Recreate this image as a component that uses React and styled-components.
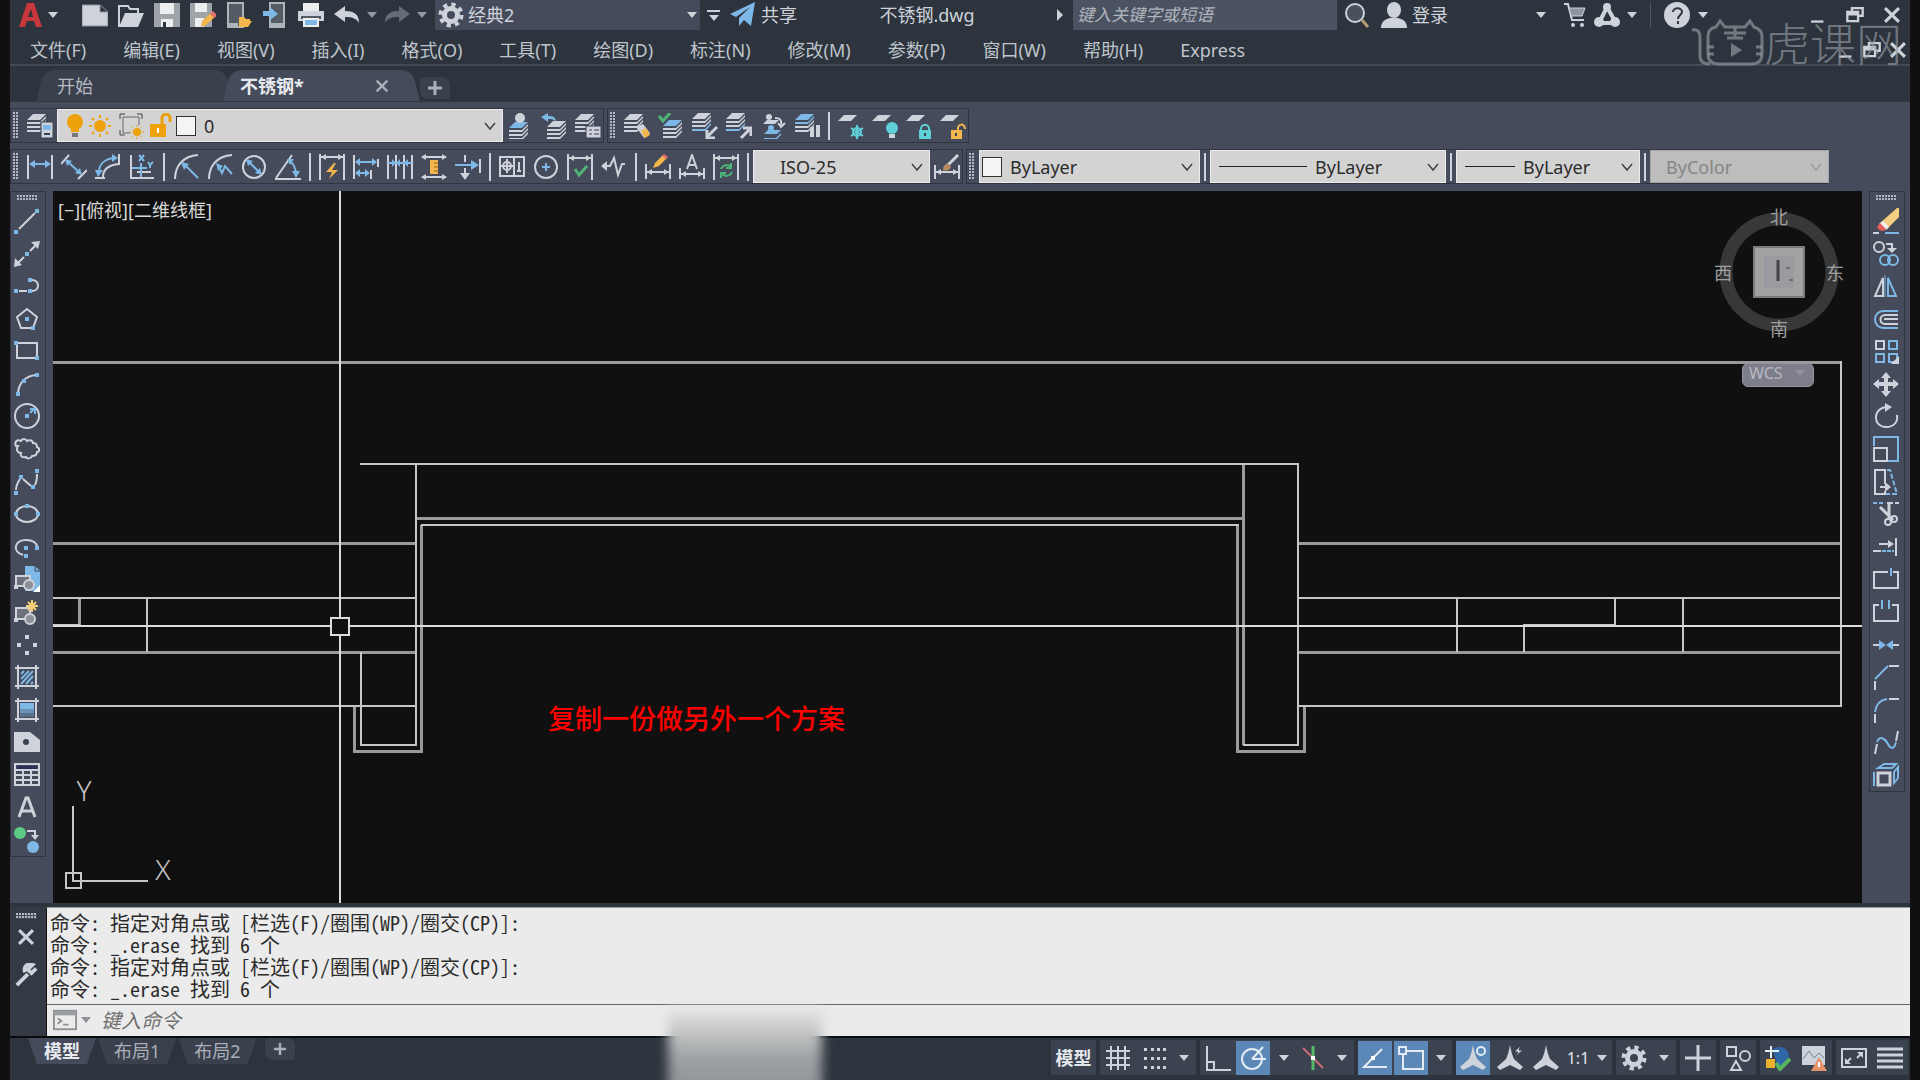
import React from "react"
import styled, { createGlobalStyle, css } from "styled-components"

const theme = {
    frame: "#101010",
    dark: "#2d343d",
    panel: "#454b5a",
    panelLine: "#2f3642",
    field: "#d3d3d3",
    fieldOff: "#bdbdbd",
    light: "#ced3db",
    blue: "#7db8e6",
    active: "#5c88b8",
    command: "#ebebeb",
    sans: `"Noto Sans", "Noto Sans CJK SC", sans-serif`,
    mono: `"Noto Sans Mono CJK SC", "Noto Sans CJK SC", monospace`,
}

const W = theme.light
const B = theme.blue
const Y = "#f2b64c"
const G = "#4fb477"
const D = "#2b2f5a"

const GlobalStyle = createGlobalStyle`
    *{
        box-sizing: border-box;
    }
    body{
        margin: 0;
        background: ${theme.frame};
        color: ${theme.light};
        font-family: ${theme.sans};
        font-size: 18px;
        line-height: 24px;
        overflow: hidden;
    }
    button, select, input{
        font: inherit;
        color: inherit;
        background: none;
        border: 0;
        border-radius: 0;
        padding: 0;
        margin: 0;
    }
`

/* ---------- icons ---------- */

const sheet = (x, y, fill) =>
    <path key={`${x}-${y}`} d={`M${x + 6} ${y}h13l-6 6h-13z`} fill={fill}/>

const stack = (x, y, fills) =>
    <>
        {fills.map((fill, i) =>
            i === 0
                ? sheet(x, y, fill)
                : <path
                    key={i}
                    d={`M${x} ${y + 4 + i * 4}h13l6-6v2l-6 6h-13z`}
                    fill={fill}
                />
        )}
    </>

const dot = (x, y, fill = B) =>
    <rect key={`${x}-${y}`} x={x - 2} y={y - 2} width="4" height="4" fill={fill}/>

const star = <path d="M13 0c1 5 2 10 4 14l9 8-3 3-10-5-10 5-3-3 9-8c2-4 3-9 4-14z" fill={W}/>

const gear =
    <>
        <circle cx="13" cy="13" r="6.5" fill="none" stroke={W} strokeWidth="5"/>
        <circle cx="13" cy="13" r="10.5" fill="none" stroke={W} strokeWidth="4" strokeDasharray="4.2 4.05"/>
    </>

const restore = <path d="M9 9V4h14v10h-5M3 9h14v3H3zM3 9v12h14V9" fill="none" stroke={W} strokeWidth="3"/>

const icons = {
    logo: <path d="M1 25L9 1h7l8 24h-6l-2-6H9l-2 6zM10 15h5l-2-8z" fill="#c8373b"/>,
    newFile: <path d="M0 3h18l8 7v14H0zM18 3v7h8" fill={W} stroke="#8d939b" strokeWidth="1"/>,
    open:
        <>
            <path d="M1 25V4h9l2 3h8v5" fill="none" stroke={W} strokeWidth="2"/>
            <path d="M1 25l6-14h19l-6 14z" fill={W}/>
        </>,
    save:
        <>
            <path d="M0 1h26v24H0z" fill="#9fa4ab"/>
            <path d="M6 1h14v11H6zM7 17h12v8H7z" fill="#eceef0"/>
            <path d="M9 20h3v5H9z" fill={theme.dark}/>
        </>,
    saveAs:
        <>
            <path d="M0 1h22v24H0z" fill="#9fa4ab"/>
            <path d="M5 1h12v9H5zM5 16h9v9H5z" fill="#eceef0"/>
            <path d="M11 25l1-6L22 10l4 4-10 9z" fill={Y}/>
            <path d="M20 12l3-3 4 4-3 3z" fill="#e2726e"/>
        </>,
    openMobile:
        <>
            <rect x="2" y="1" width="15" height="24" fill="#555b64" stroke="#aeb3b9" strokeWidth="2"/>
            <path d="M2 21h10v3H2z" fill="#aeb3b9"/>
            <path d="M13 24v-9h5l2 2h4v2h2l-4 6h-9z" fill={Y}/>
        </>,
    saveMobile:
        <>
            <rect x="8" y="1" width="14" height="24" fill="#555b64" stroke="#aeb3b9" strokeWidth="2"/>
            <path d="M8 21h14v3H8z" fill="#aeb3b9"/>
            <path d="M1 9h7V5l8 7-8 6v-4H1z" fill={B}/>
        </>,
    print:
        <>
            <path d="M5 1h16v8H5z" fill="#eceef0"/>
            <path d="M0 9h26v10H0z" fill={W}/>
            <path d="M3 14h20v3H3z" fill="#555b64"/>
            <path d="M5 16h16v9H5z" fill="#eceef0"/>
            <path d="M7 18h12v5H7z" fill={B}/>
        </>,
    undo: <path d="M0 12l11-8v5c9 0 14 3 14 12-3-5-7-6-14-6v5z" fill={W}/>,
    redo: <path d="M26 12L15 4v5C6 9 1 12 1 21c3-5 7-6 14-6v5z" fill="#666c76"/>,
    gear,
    share: <path d="M0 12L25 0l-4 24-7-6-5 6v-8L20 5 6 15z" fill={B}/>,
    search:
        <>
            <circle cx="11" cy="11" r="9" fill="#4a515c" stroke={W} strokeWidth="2"/>
            <path d="M18 18l6 7" stroke="#b59b74" strokeWidth="3"/>
        </>,
    user:
        <>
            <ellipse cx="13" cy="8" rx="7" ry="8" fill={W}/>
            <path d="M0 26c0-7 5-9 9-10h8c4 1 9 3 9 10z" fill={W}/>
        </>,
    cart:
        <>
            <path d="M3 2h4l4 16h12" fill="none" stroke={W} strokeWidth="2"/>
            <path d="M8 6h16l-3 8H10z" fill="#8f959e" stroke={W} strokeWidth="1"/>
            <circle cx="12" cy="23" r="2" fill={W}/>
            <circle cx="21" cy="23" r="2" fill={W}/>
        </>,
    autodesk:
        <>
            <path d="M13 5L5 21h17z" fill="none" stroke={W} strokeWidth="4"/>
            <circle cx="13" cy="5" r="4" fill={W}/>
            <circle cx="5" cy="20" r="5" fill={W}/>
            <circle cx="21" cy="20" r="5" fill={W}/>
        </>,
    help:
        <>
            <circle cx="13" cy="13" r="13" fill={W}/>
            <path d="M9 10c0-5 9-5 9 0 0 3-4 3-4 7M14 19v3" fill="none" stroke={theme.dark} strokeWidth="2"/>
        </>,
    minimize: <path d="M4 20h16v3H4z" fill={W}/>,
    restore,
    close: <path d="M4 4l18 18M22 4L4 22" stroke={W} strokeWidth="4"/>,
    tabClose: <path d="M6 6l14 14M20 6L6 20" stroke="#a9afb8" strokeWidth="3"/>,
    plus: <path d="M13 6v14M6 13h14" stroke="#aab0b9" strokeWidth="3"/>,

    /* layer toolbar */
    layerProps:
        <>
            {stack(0, 1, [W, W, W, W])}
            <rect x="14" y="9" width="12" height="16" fill={W} stroke="#3a4050"/>
            <rect x="16" y="12" width="8" height="5" fill={B}/>
            <path d="M17 21h6" stroke="#3a4050" strokeWidth="2"/>
        </>,
    bulb:
        <>
            <circle cx="13" cy="9" r="8" fill="#eda20c"/>
            <path d="M9 15h8v4H9z" fill="#eda20c"/>
            <path d="M10 20h6v4h-6z" fill="#777"/>
        </>,
    sun:
        <>
            <circle cx="12" cy="13" r="6" fill="#eda20c"/>
            <path d="M12 2v3M12 21v3M1 13h3M20 13h3M4 5l2 2M18 19l2 2M4 21l2-2M18 7l2-2" stroke="#eda20c" strokeWidth="2"/>
        </>,
    sunFrame:
        <>
            <path d="M2 6V1h5M19 1h5v5M2 17v5h5" fill="none" stroke="#444" strokeWidth="1"/>
            <path d="M12 20H5V4h16v8" fill="none" stroke="#666" strokeWidth="1"/>
            <circle cx="19" cy="19" r="4" fill="#eda20c"/>
            <path d="M19 12v2M19 24v2M12 19h2M24 19h2M14 14l1 1M24 14l-1 1M14 24l1-1M24 24l-1-1" stroke="#eda20c" strokeWidth="1"/>
        </>,
    unlock:
        <>
            <path d="M3 11h16v13H3z" fill="#eda20c"/>
            <path d="M15 11V5c0-5 8-5 8 0v4" fill="none" stroke="#eda20c" strokeWidth="3"/>
            <path d="M11 15v5" stroke="#fff" strokeWidth="2"/>
        </>,
    layerUser:
        <>
            {stack(2, 9, [B, W, W, W])}
            <circle cx="13" cy="5" r="5" fill={W}/>
        </>,
    layerPrev:
        <>
            {stack(6, 8, [W, W, W, W])}
            <path d="M0 4l7-4v3c5 0 8 1 8 6-2-3-4-3-8-3v3z" fill={B}/>
        </>,
    layerState:
        <>
            {stack(0, 1, [W, W, W, W])}
            <rect x="11" y="13" width="15" height="12" fill={W} stroke="#3a4050"/>
            <path d="M14 17h3M19 17h5M14 21h3M19 21h5" stroke="#3a4050" strokeWidth="1"/>
        </>,
    layerMatch:
        <>
            {stack(0, 1, [W, W, W, W])}
            <path d="M12 14l7-3 7 9-6 5z" fill={W}/>
            <path d="M17 18l5-3 4 7-5 3z" fill={Y}/>
        </>,
    layerCheck:
        <>
            {stack(5, 7, [B, W, W, W])}
            <path d="M1 3l4 5 7-8" fill="none" stroke={G} strokeWidth="3"/>
        </>,
    layerIn:
        <>
            {stack(0, 0, [W, W, W, B])}
            <path d="M25 14l-9 9M15 17v8h8" fill="none" stroke={W} strokeWidth="3"/>
        </>,
    layerOut:
        <>
            {stack(0, 0, [W, W, W, B])}
            <path d="M15 25l9-9M17 15h8v8" fill="none" stroke={W} strokeWidth="3"/>
        </>,
    layerWalk:
        <>
            <path d="M3 11l4-4h12l-4 4z" fill={W}/>
            <circle cx="9" cy="4" r="3" fill={W}/>
            <path d="M15 5c5 0 7 2 6 7M18 10l3 4 4-4" fill="none" stroke={W} strokeWidth="2"/>
            <circle cx="11" cy="15" r="3" fill={B}/>
            <path d="M4 21l4-4h13l-4 4zM4 25h12l5-5v2l-4 4H4z" fill={B}/>
        </>,
    layerIsolate:
        <>
            {stack(1, 1, [B, B, W, W])}
            <rect x="16" y="14" width="4" height="10" fill={W}/>
            <rect x="22" y="12" width="4" height="12" fill={W}/>
        </>,
    layerFreeze:
        <>
            {sheet(0, 2, W)}
            <path d="M19 12v14M13 15l12 8M25 15l-12 8" stroke="#5fd0d8" strokeWidth="2"/>
            <circle cx="19" cy="19" r="4" fill="none" stroke="#5fd0d8" strokeWidth="2"/>
        </>,
    layerOff:
        <>
            {sheet(0, 2, W)}
            <circle cx="20" cy="15" r="6" fill="#5fd0d8"/>
            <path d="M17 21h6v4h-6z" fill={W}/>
        </>,
    layerLock:
        <>
            {sheet(0, 2, W)}
            <path d="M13 17h12v9H13z" fill="#5fd0d8"/>
            <path d="M15 17c-1-7 9-7 8 0" fill="none" stroke="#5fd0d8" strokeWidth="2"/>
            <path d="M19 20v3" stroke="#3a4050" strokeWidth="2"/>
        </>,
    layerUnlock:
        <>
            {sheet(0, 2, W)}
            <path d="M11 17h11v9H11z" fill={Y}/>
            <path d="M18 17c-1-7 7-7 7-1" fill="none" stroke={Y} strokeWidth="2"/>
            <path d="M16 20v3" stroke="#3a4050" strokeWidth="2"/>
        </>,

    /* dimension toolbar */
    dimLinear:
        <>
            <path d="M1 1v24M25 1v24" stroke={W} strokeWidth="2"/>
            <path d="M4 10h18" stroke={B} strokeWidth="2"/>
            <path d="M2 10l6-4v8zM24 10l-6-4v8z" fill={B}/>
        </>,
    dimAligned:
        <>
            <path d="M0 10l8-9M17 25l9-9" stroke={W} strokeWidth="2"/>
            <path d="M6 7l13 12" stroke={B} strokeWidth="2"/>
            <path d="M4 5l7 2-5 5zM21 21l-7-2 5-5z" fill={B}/>
        </>,
    dimArc:
        <>
            <path d="M0 24h10M24 0v11M8 23c0-8 6-12 16-13" fill="none" stroke={W} strokeWidth="2"/>
            <path d="M4 18C4 10 10 5 19 4" fill="none" stroke={B} strokeWidth="2"/>
            <path d="M0 16h8l-5 7zM17 0l6 4-6 4z" fill={B}/>
        </>,
    dimOrdinate:
        <>
            <path d="M2 1v23h23M8 18h14" fill="none" stroke={W} strokeWidth="2"/>
            <path d="M12 9v14M3 14h15M10 1l5 6M15 1l-5 6M19 8l2 3 3-3M21 11v3" fill="none" stroke={B} strokeWidth="2"/>
        </>,
    dimRadius:
        <>
            <path d="M25 1C10 2 2 12 2 25" fill="none" stroke={W} strokeWidth="2"/>
            <path d="M10 9l15 15" stroke={B} strokeWidth="2"/>
            <path d="M8 8l8 2-5 6z" fill={B}/>
        </>,
    dimJogged:
        <>
            <path d="M25 1C10 2 2 12 2 25" fill="none" stroke={W} strokeWidth="2"/>
            <path d="M11 11l4 8 3-7 7 8" fill="none" stroke={B} strokeWidth="2"/>
            <path d="M9 9l7 3-5 5z" fill={B}/>
        </>,
    dimDiameter:
        <>
            <circle cx="13" cy="13" r="11" fill="none" stroke={W} strokeWidth="2"/>
            <path d="M7 7l12 12" stroke={B} strokeWidth="2"/>
            <path d="M5 5l7 2-5 5zM21 21l-7-2 5-5z" fill={B}/>
        </>,
    dimAngular:
        <>
            <path d="M17 1L1 24M0 25h26" fill="none" stroke={W} strokeWidth="2"/>
            <path d="M15 7c5 4 6 8 6 14" fill="none" stroke={B} strokeWidth="2"/>
            <path d="M12 5h7l-4 6zM17 17h8l-4 7z" fill={B}/>
        </>,
    dimQuick:
        <>
            <path d="M1 0v26M25 0v26M2 3h22" fill="none" stroke={W} strokeWidth="2"/>
            <path d="M2 3l5-3v6zM24 3l-5-3v6z" fill={W}/>
            <path d="M15 9l-8 9h6l-3 7 9-9h-6l4-7z" fill={Y}/>
        </>,
    dimBaseline:
        <>
            <path d="M1 1v24M25 5v8M18 16v9" stroke={W} strokeWidth="2"/>
            <path d="M3 8h20M3 19h13" fill="none" stroke={B} strokeWidth="2"/>
            <path d="M2 8l5-4v8zM24 8l-5-4v8zM2 19l5-4v8zM17 19l-5-4v8z" fill={B}/>
        </>,
    dimContinue:
        <>
            <path d="M1 1v24M9 1v24M17 1v24M25 1v24" stroke={W} strokeWidth="2"/>
            <path d="M1 9h24" fill="none" stroke={B} strokeWidth="2"/>
            <path d="M9 9L5 5v8zM9 9l4-4v8zM17 9l4-4v8z" fill={B}/>
        </>,
    dimSpace:
        <>
            <path d="M1 3h24M1 23h24" fill="none" stroke={W} strokeWidth="2"/>
            <path d="M0 3l5-3v6zM26 3l-5-3v6zM0 23l5-3v6zM26 23l-5-3v6z" fill={W}/>
            <path d="M9 6h8v14H9z" fill={Y}/>
            <path d="M13 9h4M13 13h4M13 17h4" stroke="#8d6824"/>
        </>,
    dimBreak:
        <>
            <path d="M10 1v7M10 14v7M25 5v14" fill="none" stroke={W} strokeWidth="2"/>
            <path d="M5 19h10l-5 7z" fill={W}/>
            <path d="M0 11h18" fill="none" stroke={B} strokeWidth="2"/>
            <path d="M16 6l8 5-8 5z" fill={B}/>
        </>,
    tolerance:
        <>
            <rect x="1" y="3" width="24" height="19" fill="none" stroke={W} strokeWidth="2"/>
            <circle cx="8" cy="12" r="4" fill="none" stroke={W} strokeWidth="2"/>
            <path d="M8 5v14M2 12h12M15 3v19M20 8v9M18 17h4" stroke={W} strokeWidth="2"/>
        </>,
    centerMark:
        <>
            <circle cx="13" cy="13" r="11" fill="none" stroke={W} strokeWidth="2"/>
            <path d="M13 9v8M9 13h8" stroke={B} strokeWidth="2"/>
        </>,
    inspect:
        <>
            <path d="M1 0v26M25 0v26M2 4h22" fill="none" stroke={W} strokeWidth="2"/>
            <path d="M2 4l5-3v6zM24 4l-5-3v6z" fill={W}/>
            <path d="M8 15l4 6 8-9" fill="none" stroke={G} strokeWidth="3"/>
        </>,
    jogLine:
        <>
            <path d="M3 12h6l4-8 4 17 4-11h3" fill="none" stroke={W} strokeWidth="2"/>
            <path d="M0 12l6-5v10z" fill={W}/>
        </>,
    dimEdit:
        <>
            <path d="M1 10v15M25 10v15M2 18h22" fill="none" stroke={W} strokeWidth="2"/>
            <path d="M2 18l5-3v6zM24 18l-5-3v6z" fill={W}/>
            <path d="M8 14l2-5 8-8 4 3-8 8z" fill={Y}/>
            <path d="M17 2l2-2 4 3-2 2z" fill="#e2726e"/>
        </>,
    dimText:
        <>
            <path d="M1 14v11M25 14v11M2 20h22M8 15l5-14 5 14M10 11h6" fill="none" stroke={W} strokeWidth="2"/>
            <path d="M2 20l5-3v6zM24 20l-5-3v6z" fill={W}/>
        </>,
    dimUpdate:
        <>
            <path d="M1 0v26M25 0v26M2 4h22" fill="none" stroke={W} strokeWidth="2"/>
            <path d="M2 4l5-3v6zM24 4l-5-3v6z" fill={W}/>
            <path d="M8 15c2-5 8-5 10-1M18 9v5h-5M19 18c-2 5-8 5-10 1M8 24v-5h5" fill="none" stroke={G} strokeWidth="2"/>
        </>,
    dimStyle:
        <>
            <path d="M1 11v14M25 11v14M2 18h22" fill="none" stroke={W} strokeWidth="2"/>
            <path d="M2 18l5-3v6zM24 18l-5-3v6z" fill={W}/>
            <path d="M24 1L14 11" stroke={W} strokeWidth="3"/>
            <path d="M9 16c0-5 3-7 6-6l2 3c-1 3-4 4-8 3z" fill="#b98a62"/>
        </>,

    /* draw toolbar */
    line:
        <>
            <path d="M5 21L21 5" stroke={W} strokeWidth="2"/>
            {dot(2, 24)}{dot(23, 3)}
        </>,
    xline:
        <>
            <path d="M3 23l7-7M16 10l7-7" stroke={W} strokeWidth="2"/>
            <path d="M0 26l1-9 7 7zM26 0l-9 1 7 7z" fill={W}/>
            {dot(13, 13)}
        </>,
    polyline:
        <>
            <path d="M5 18h8M18 7c8 0 8 11 0 11" fill="none" stroke={W} strokeWidth="2"/>
            {dot(2, 18)}{dot(16, 18)}{dot(16, 7)}
        </>,
    polygon:
        <>
            <path d="M13 3l10 8-4 11H7L3 11z" fill="none" stroke={W} strokeWidth="2"/>
            {dot(13, 13)}{dot(19, 22)}
        </>,
    rect:
        <>
            <rect x="3" y="5" width="20" height="15" fill="none" stroke={W} strokeWidth="2"/>
            {dot(2, 5)}{dot(23, 20)}
        </>,
    arc:
        <>
            <path d="M4 22C5 11 12 5 22 4" fill="none" stroke={W} strokeWidth="2"/>
            {dot(4, 23)}{dot(10, 10)}{dot(23, 4)}
        </>,
    circle:
        <>
            <circle cx="13" cy="13" r="12" fill="none" stroke={W} strokeWidth="2"/>
            <path d="M16 10l5-5M16 6h5v5" fill="none" stroke={B} strokeWidth="2"/>
            {dot(13, 13)}
        </>,
    cloud: <path d="M2 10c-2-4 1-7 5-5 2-3 5-2 6 0 3-2 6 0 6 2 4 0 4 3 4 4 3 1 3 5 0 5 0 4-3 4-5 4-1 3-5 3-6 1-4 1-6-1-5-4-4 0-5-4-3-7z" fill="none" stroke={W} strokeWidth="2"/>,
    spline:
        <>
            <path d="M2 21c0-5 2-8 4-11M9 10l8 7M21 16c2-4 2-7 2-11" fill="none" stroke={W} strokeWidth="2"/>
            {dot(2, 24)}{dot(7, 8)}{dot(19, 18)}{dot(23, 2)}
        </>,
    ellipse:
        <>
            <ellipse cx="13" cy="13" rx="11" ry="8" fill="none" stroke={W} strokeWidth="2"/>
            {dot(2, 13)}{dot(24, 13)}{dot(13, 5)}
        </>,
    ellipseArc:
        <>
            <path d="M9 21C-2 18 0 6 12 6c7 0 11 3 11 7" fill="none" stroke={W} strokeWidth="2"/>
            {dot(12, 14)}{dot(23, 14)}{dot(12, 22)}
        </>,
    insertBlock:
        <>
            <path d="M11 0h10l5 5v20H11z" fill={B}/>
            <path d="M21 0v5h5" fill="none" stroke="#3a4050"/>
            <path d="M2 20V10h14v10z" fill="#6c717b" stroke={W} strokeWidth="2"/>
            <circle cx="15" cy="19" r="5" fill="#8b9099" stroke={W} strokeWidth="2"/>
            <path d="M26 19v7h-7z" fill="#fff"/>
            {dot(2, 21, W)}
        </>,
    makeBlock:
        <>
            <path d="M2 20V9h14v11z" fill="#6c717b" stroke={W} strokeWidth="2"/>
            <circle cx="16" cy="20" r="5" fill="#8b9099" stroke={W} strokeWidth="2"/>
            <path d="M18 1v12M12 7h12M14 3l8 8M22 3l-8 8" stroke="#f6ce74" strokeWidth="2"/>
            {dot(2, 21, W)}
        </>,
    point: <>{dot(13, 5, W)}{dot(5, 13, W)}{dot(21, 13, W)}{dot(13, 21, W)}</>,
    hatch:
        <>
            <path d="M4 1v24M22 1v24M1 4h24M1 22h24" stroke={W} strokeWidth="2"/>
            <path d="M7 10l3-3M7 15l8-8M7 20L19 7M12 20l7-8M17 20l2-2" stroke={B} strokeWidth="2"/>
        </>,
    gradient:
        <>
            <path d="M4 1v24M22 1v24M1 4h24M1 22h24" stroke={W} strokeWidth="2"/>
            <rect x="6" y="6" width="14" height="6" fill={B}/>
            <rect x="6" y="12" width="14" height="4" fill="#6b93b8"/>
            <rect x="6" y="16" width="14" height="4" fill="#566f8b"/>
        </>,
    region:
        <>
            <path d="M0 3h16l10 8v12H0z" fill={W}/>
            <circle cx="12" cy="13" r="3" fill="#3a4050"/>
        </>,
    table:
        <>
            <rect x="1" y="2" width="24" height="21" fill="none" stroke={W} strokeWidth="2"/>
            <rect x="3" y="4" width="20" height="3" fill={D}/>
            <path d="M1 8h24M1 13h24M1 18h24M9 8v15M17 8v15" stroke={W} strokeWidth="2"/>
        </>,
    mtext: <path d="M5 23L12 4h2l7 19M8 17h10" fill="none" stroke={W} strokeWidth="3"/>,
    addSelected:
        <>
            <circle cx="6" cy="6" r="6" fill="#5ccb85"/>
            <path d="M13 4h8v6" fill="none" stroke={W} strokeWidth="2"/>
            <path d="M17 8h8l-4 5z" fill={W}/>
            <circle cx="19" cy="20" r="6" fill={B}/>
        </>,

    /* modify toolbar */
    erase:
        <>
            <path d="M24 0h2v9L14 21l-7-6z" fill="#f3cf82"/>
            <path d="M10 13l6 6-3 3-7-6z" fill="#f0f0f0"/>
            <path d="M7 15l6 6c-3 4-8 1-9-2z" fill="#e35d5b"/>
            <path d="M0 25h6" stroke={W} strokeWidth="2"/>
            <path d="M12 25h14" stroke={B} strokeWidth="2"/>
        </>,
    copy:
        <>
            <circle cx="6" cy="6" r="5" fill="none" stroke={W} strokeWidth="2"/>
            <path d="M13 3h6v5" fill="none" stroke={W} strokeWidth="2"/>
            <path d="M14 7h10l-5 5z" fill={W}/>
            <circle cx="12" cy="19" r="5" fill="none" stroke={B} strokeWidth="2"/>
            <circle cx="20" cy="19" r="5" fill="none" stroke={B} strokeWidth="2"/>
        </>,
    mirror:
        <>
            <path d="M10 5v18H2z" fill="none" stroke={W} strokeWidth="2"/>
            <path d="M15 5v18h8z" fill="none" stroke={B} strokeWidth="2"/>
            <path d="M12 2v22" stroke={B} strokeWidth="1"/>
        </>,
    offset:
        <>
            <path d="M25 5H11c-12 0-12 17 0 17h14" fill="none" stroke={B} strokeWidth="2"/>
            <path d="M25 9H12c-6 0-6 9 0 9h13M25 13H11" fill="none" stroke={W} strokeWidth="2"/>
        </>,
    array:
        <>
            <rect x="3" y="3" width="8" height="8" fill="none" stroke={W} strokeWidth="2"/>
            <path d="M16 3h8v8h-8zM3 16h8v8H3zM16 16h8v8h-8z" fill="none" stroke={B} strokeWidth="2"/>
            <path d="M26 18v8h-8z" fill={W}/>
        </>,
    move: <path d="M13 1l5 6h-3v4h5V8l6 5-6 5v-3h-5v5h3l-5 6-5-6h3v-5H6v3l-6-5 6-5v3h5V7H8z" fill={W}/>,
    rotate:
        <>
            <path d="M13 4C-1 6 0 24 13 24c9 0 12-6 11-12" fill="none" stroke={W} strokeWidth="2"/>
            <path d="M12 0l7 4-7 5z" fill={W}/>
        </>,
    scale:
        <>
            <path d="M1 10V1h24v24H15" fill="none" stroke={B} strokeWidth="2"/>
            <rect x="1" y="12" width="13" height="13" fill="none" stroke={W} strokeWidth="2"/>
        </>,
    stretch:
        <>
            <path d="M12 15V1H2v24h10v-3" fill="none" stroke={W} strokeWidth="2"/>
            <path d="M14 1h3l7 24H13" fill="none" stroke={B} strokeWidth="2" strokeDasharray="5 2"/>
            <path d="M7 18h6" fill="none" stroke={W} strokeWidth="2"/>
            <path d="M12 13l6 5-6 5z" fill={W}/>
        </>,
    trim:
        <>
            <path d="M0 2h12" stroke={B} strokeWidth="2" strokeDasharray="4 2"/>
            <path d="M14 2h12" stroke={W} strokeWidth="2" strokeDasharray="6 2"/>
            <path d="M16 1v17M7 6l13 13" stroke={W} strokeWidth="3"/>
            <circle cx="15" cy="21" r="3" fill="none" stroke={W} strokeWidth="2"/>
            <circle cx="21" cy="18" r="3" fill="none" stroke={W} strokeWidth="2"/>
        </>,
    extend:
        <>
            <path d="M23 4v18M6 10h11" fill="none" stroke={W} strokeWidth="2"/>
            <path d="M15 6l6 4-6 4z" fill={W}/>
            <path d="M0 17h8" stroke={W} strokeWidth="2"/>
            <path d="M9 17h12" stroke={B} strokeWidth="2" strokeDasharray="4 1"/>
        </>,
    breakPoint:
        <>
            <path d="M15 6H1v16h24V6h-5" fill="none" stroke={W} strokeWidth="2"/>
            <path d="M18 2v8" stroke={B} strokeWidth="2"/>
        </>,
    breakGap:
        <>
            <path d="M6 6H1v16h24V6h-6" fill="none" stroke={W} strokeWidth="2"/>
            <path d="M9 1v9M16 1v9" stroke={B} strokeWidth="2"/>
        </>,
    join:
        <>
            <path d="M0 13h7M19 13h7" stroke={W} strokeWidth="2"/>
            <path d="M6 8l7 5-7 5zM20 8l-7 5 7 5z" fill={B}/>
        </>,
    chamfer:
        <>
            <path d="M2 26v-9M16 2h10" stroke={W} strokeWidth="2"/>
            <path d="M2 15L15 2" stroke={B} strokeWidth="2"/>
        </>,
    fillet:
        <>
            <path d="M2 26v-9M16 2h10" stroke={W} strokeWidth="2"/>
            <path d="M2 15C3 7 7 3 14 2" fill="none" stroke={B} strokeWidth="2"/>
        </>,
    blend:
        <>
            <path d="M2 25l2-10M23 12l2-10" stroke={W} strokeWidth="2"/>
            <path d="M4 13c3-8 9-2 11 2s6 7 8-2" fill="none" stroke={B} strokeWidth="2"/>
        </>,
    explode:
        <>
            <path d="M5 6l6-4h12l-4 4zM21 10l4-5v11l-4 5zM1 10v14" fill="none" stroke={B} strokeWidth="2"/>
            <rect x="5" y="11" width="12" height="12" fill="none" stroke={W} strokeWidth="3"/>
        </>,

    /* command line */
    wrench: <path d="M3 24L15 12M24 6l-5 5-4-4 5-5c-7-2-10 3-8 8" fill="none" stroke={W} strokeWidth="4"/>,
    prompt:
        <>
            <rect x="1" y="3" width="24" height="20" fill="none" stroke="#8c8f94" strokeWidth="2"/>
            <path d="M1 3h24v5H1z" fill="#9a9da2"/>
            <path d="M5 11l4 3-4 3M11 18h6" fill="none" stroke="#8c8f94" strokeWidth="2"/>
        </>,

    /* status bar */
    grid: <path d="M6 1v24M13 1v24M20 1v24M1 6h24M1 13h24M1 20h24" stroke={W} strokeWidth="2"/>,
    snap: <>{[3, 10, 16, 22].map(x => [4, 13, 22].map(y => <rect key={`${x}-${y}`} x={x} y={y - 1} width="3" height="3" fill={W}/>))}</>,
    ortho: <path d="M2 1v24h24M2 17h7v8" fill="none" stroke={W} strokeWidth="2"/>,
    polar:
        <>
            <circle cx="12" cy="14" r="10" fill="none" stroke="#e3ebf3" strokeWidth="2"/>
            <path d="M12 14L23 2M12 14h14" stroke="#e3ebf3" strokeWidth="2"/>
        </>,
    iso:
        <>
            <path d="M3 3l20 20" stroke="#c96c76" strokeWidth="2"/>
            <path d="M13 1v24" stroke="#57b86a" strokeWidth="3"/>
            {dot(13, 13, "#fff")}
        </>,
    tracking:
        <>
            <path d="M20 4L2 22h23" fill="none" stroke="#e3ebf3" strokeWidth="2"/>
            {dot(11, 13, "#fff")}
        </>,
    osnap:
        <>
            <path d="M9 6h16v18H5V10" fill="none" stroke="#e3ebf3" strokeWidth="2"/>
            <rect x="1" y="2" width="7" height="7" fill="none" stroke="#e3ebf3" strokeWidth="2"/>
        </>,
    annoVisible:
        <>
            {star}
            <circle cx="21" cy="6" r="4" fill={theme.active} stroke="#e3ebf3" strokeWidth="2"/>
        </>,
    annoAuto:
        <>
            {star}
            <path d="M24 0l-7 7h4l-4 6 9-8h-4z" fill={W} stroke="#3a4150" strokeWidth="1"/>
        </>,
    anno: star,
    cross: <path d="M13 0v26M0 13h26" stroke={W} strokeWidth="3"/>,
    shapes:
        <>
            <rect x="2" y="2" width="9" height="9" fill="none" stroke={W} strokeWidth="2"/>
            <circle cx="20" cy="11" r="5" fill="none" stroke={W} strokeWidth="2"/>
            <path d="M11 16l-5 9h10z" fill="none" stroke={W} strokeWidth="2"/>
        </>,
    graphics:
        <>
            <path d="M8 4c8-5 16 0 16 8s-6 11-12 9z" fill="#2f66a8"/>
            <path d="M6 1v12M0 6h14" stroke="#e3ebf3" strokeWidth="2"/>
            <path d="M1 14h9v9H1z" fill="#edb02e"/>
            <path d="M11 18l4 6 10-10" fill="none" stroke="#57b45f" strokeWidth="4"/>
        </>,
    monitor:
        <>
            <rect x="1" y="1" width="23" height="19" fill={W}/>
            <path d="M2 14l6-8 5 7 5-5 5 5" fill="none" stroke="#6d8791" strokeWidth="1"/>
            <path d="M18 12l8 14H10z" fill="#e5936d"/>
            <path d="M18 17v5" stroke="#fff" strokeWidth="2"/>
        </>,
    fullscreen:
        <>
            <rect x="1" y="4" width="24" height="18" fill="none" stroke={W} strokeWidth="2"/>
            <path d="M4 19v-6l6 6zM22 7v6l-6-6z" fill={W}/>
            <path d="M6 17l4-4M20 9l-4 4" stroke={W} strokeWidth="2"/>
        </>,
    menu: <path d="M0 4h26M0 10h26M0 16h26M0 22h26" stroke={W} strokeWidth="3"/>,
}

const Svg = styled.svg`
    display: block;
    flex: none;
    width: ${p => p.$size}px;
    height: ${p => p.$size}px;
`

const Icon = ({ name, size = 26 }) =>
    <Svg $size={size} viewBox="0 0 26 26" aria-hidden="true">{icons[name]}</Svg>

const Caret = styled.span`
    flex: none;
    width: 0;
    height: 0;
    border-left: 5px solid transparent;
    border-right: 5px solid transparent;
    border-top: 6px solid ${p => p.$color || theme.light};
`

const CaretRight = styled.span`
    width: 0;
    height: 0;
    border-top: 6px solid transparent;
    border-bottom: 6px solid transparent;
    border-left: 6px solid ${theme.light};
`

const IconButton = styled.button`
    display: flex;
    align-items: center;
    justify-content: center;
    flex: none;
    gap: ${p => p.$gap || 0}px;
    cursor: pointer;
`

/* ---------- page ---------- */

const Page = styled.div`
    display: flex;
    flex-direction: column;
    min-height: 100vh;
    margin: 0 10px;
    background: ${theme.dark};
    white-space: nowrap;
    position: relative;
`

/* ---------- title bar ---------- */

const TitleBar = styled.header`
    display: flex;
    align-items: center;
    height: 30px;
    padding: 0 8px;
`

const Tools = styled.div`
    display: flex;
    align-items: center;
    gap: ${p => p.$gap}px;
    margin-left: ${p => p.$before || 0}px;
`

const Workspace = styled.label`
    display: flex;
    align-items: center;
    gap: 4px;
    width: 265px;
    height: 30px;
    padding: 0 3px;
    margin-left: 8px;
    background: ${theme.panel};
`

const PlainSelect = styled.select`
    flex: 1;
    min-width: 0;
    appearance: none;
    outline: none;
`

const OverflowMark = styled.span`
    display: flex;
    flex-direction: column;
    align-items: center;
    gap: 3px;
    &::before{
        content: "";
        width: 13px;
        height: 2px;
        background: ${theme.light};
    }
`

const DocTitle = styled.h1`
    flex: 1;
    margin: 0;
    font-size: 18px;
    font-weight: 400;
    text-align: center;
`

const SearchInput = styled.input`
    width: 264px;
    height: 30px;
    padding: 0 4px 2px;
    background: #4b5362;
    font-size: 17px;
    outline: none;
    &::placeholder{
        color: #b0b5be;
        font-style: italic;
        opacity: 1;
    }
`

const Divider = styled.span`
    width: 1px;
    height: 26px;
    background: #4d535d;
`

/* ---------- menu ---------- */

const MenuBar = styled.nav`
    display: flex;
    align-items: center;
    height: 36px;
    padding: 5px 2px 0 20px;
    border-bottom: 2px solid #444a53;
`

const MenuList = styled.div`
    display: flex;
    gap: 37px;
    flex: 1;
`

const MenuLink = styled.a`
    color: #bfc4cc;
    text-decoration: none;
`

/* ---------- file tabs ---------- */

const FileTabs = styled.div`
    display: flex;
    align-items: flex-end;
    height: 36px;
    padding-left: 36px;
    border-bottom: 1px solid ${theme.panelLine};
`

const FileTab = styled.div`
    position: relative;
    z-index: 0;
    display: flex;
    align-items: center;
    justify-content: space-between;
    width: 187px;
    height: 31px;
    padding: 0 28px 0 ${p => p.$active ? 7 : 11}px;
    color: ${p => p.$active ? "#e6e9ee" : "#b4b9c2"};
    font-weight: ${p => p.$active ? 700 : 400};
    &::before, &::after{
        content: "";
        position: absolute;
        z-index: -1;
        top: 0;
        bottom: 0;
        width: 60%;
        background: ${p => p.$active ? theme.panel : "#3a404c"};
    }
    &::before{
        left: -6px;
        border-radius: 10px 0 0 0;
        transform: skewX(-14deg);
    }
    &::after{
        right: 4px;
        border-radius: 0 10px 0 0;
        transform: skewX(14deg);
    }
`

const NewTab = styled(IconButton)`
    width: 30px;
    height: 22px;
    margin: 0 0 2px ${p => p.$before}px;
    background: #3a404c;
    border-radius: 3px 8px 3px 8px;
`

/* ---------- toolbars ---------- */

const ToolbarArea = styled.div`
    display: flex;
    flex-direction: column;
    gap: 6px;
    padding: 6px 0 7px;
    background: ${theme.panel};
`

const ToolbarRow = styled.div`
    display: flex;
    gap: 3px;
`

const Toolbar = styled.div`
    display: flex;
    align-items: center;
    gap: 8px;
    height: 35px;
    padding: 0 2px;
    border: 1px solid ${theme.panelLine};
`

const Grip = styled.span`
    flex: none;
    width: ${p => p.$flat ? 21 : 6}px;
    height: ${p => p.$flat ? 6 : 27}px;
    background:
        repeating-linear-gradient(90deg, transparent 0 2px, ${theme.panel} 2px 3px),
        repeating-linear-gradient(transparent 0 2px, ${theme.panel} 2px 3px),
        #b4b9c3;
`

const Separator = styled.span`
    flex: none;
    width: 2px;
    height: 28px;
    background: ${theme.light};
`

const Combo = styled.label`
    display: flex;
    align-items: center;
    gap: 8px;
    width: ${p => p.$width}px;
    height: 33px;
    margin: 0 -4px;
    padding: 0 6px 0 ${p => p.$pad}px;
    background: ${p => p.$off ? theme.fieldOff : theme.field};
    color: ${p => p.$off ? "#858585" : "#2c2c2c"};
    border: 1px solid ${p => p.$off ? "#a5a5a5" : "#ececec"};
    select:disabled{
        opacity: 1;
    }
`

const Swatch = styled.span`
    flex: none;
    width: 20px;
    height: 20px;
    background: #f4f4f4;
    border: 1px solid #333;
`

const LineSample = styled.span`
    flex: none;
    width: ${p => p.$width}px;
    height: 1px;
    background: #222;
`

const Chevron = ({ off }) =>
    <Svg $size={12} viewBox="0 0 12 12" aria-hidden="true">
        <path d="M1 3l5 6 5-6" fill="none" stroke={off ? "#9b9b9b" : "#444"} strokeWidth="1.5"/>
    </Svg>

/* ---------- workspace ---------- */

const Body = styled.main`
    display: grid;
    grid-template-columns: 43px 1fr 48px;
    flex: 1;
    background: ${theme.panel};
`

const SideToolbar = styled.div`
    display: flex;
    flex-direction: column;
    align-items: center;
    justify-content: space-between;
    width: 36px;
    height: ${p => p.$height}px;
    margin-left: ${p => p.$before || 0}px;
    padding: 3px 2px 3px 0;
    border: 1px solid ${theme.panelLine};
`

const SideTools = styled.div`
    display: flex;
    flex-direction: column;
    justify-content: space-between;
    flex: 1;
    margin-top: 7px;
`

const Canvas = styled.section`
    position: relative;
    background: ${theme.frame};
    overflow: hidden;
`

const Drawing = styled.svg`
    display: block;
    width: 100%;
    height: auto;
`

const ViewLabel = styled.div`
    position: absolute;
    left: 5px;
    top: 7px;
    color: #d8d8d8;
`

const Caption = styled.div`
    position: absolute;
    left: 495px;
    top: 512px;
    color: #f00;
    font-size: 27px;
    font-weight: 500;
    line-height: 32px;
`

const AxisLabel = styled.div`
    position: absolute;
    left: ${p => p.$x}px;
    top: ${p => p.$y}px;
    width: 24px;
    text-align: center;
    font-size: 28px;
    font-weight: 300;
    line-height: 26px;
    color: #c4c4c4;
`

const ViewCube = styled.div`
    position: absolute;
    top: 14px;
    right: 18px;
    display: grid;
    grid-template-columns: 18px 94px 18px;
    grid-template-rows: 24px 88px 24px;
    place-items: center;
    color: #a0a0a0;
`

const Ring = styled.svg`
    position: absolute;
    left: 5px;
    top: 7px;
    width: 120px;
    height: 120px;
`

const Compass = styled.span`
    position: relative;
    grid-area: ${p => p.$area};
`

const WcsButton = styled.button`
    position: absolute;
    top: 172px;
    right: 48px;
    display: flex;
    align-items: center;
    justify-content: space-between;
    width: 72px;
    height: 24px;
    padding: 0 8px 4px 6px;
    background: #7d7e8a;
    color: #b8b9c2;
    border: 1px solid #94959f;
    border-radius: 6px;
    font-size: 16px;
`

/* ---------- command line ---------- */

const CommandPanel = styled.section`
    display: flex;
    margin-top: 4px;
    border-bottom: 2px solid #0b0c0e;
    background: #333a45;
`

const CommandHandle = styled.div`
    display: flex;
    flex-direction: column;
    align-items: center;
    gap: 8px;
    width: 36px;
    padding: 6px 4px 0 0;
`

const WrenchButton = styled(IconButton)`
    margin-top: 8px;
`

const CommandBody = styled.div`
    flex: 1;
    background: ${theme.command};
    color: #2b2b2b;
    font-family: ${theme.mono};
    font-size: 20px;
    border-left: 1px solid #111;
    border-top: 1px solid #999;
`

const History = styled.pre`
    margin: 0;
    padding: 4px 3px;
    font: inherit;
    line-height: 22px;
    border-bottom: 1px solid #666;
`

const Prompt = styled.label`
    display: flex;
    align-items: center;
    height: 31px;
    padding: 0 0 2px 6px;
    gap: 4px;
`

const CommandInput = styled.input`
    flex: 1;
    margin-left: 6px;
    outline: none;
    &::placeholder{
        color: #707070;
        font-style: italic;
        opacity: 1;
    }
`

/* ---------- status bar ---------- */

const StatusBar = styled.footer`
    display: flex;
    justify-content: space-between;
    height: 42px;
    padding-right: 2px;
`

const LayoutTabs = styled.div`
    display: flex;
    height: 26px;
    padding-left: 18px;
    gap: 2px;
`

const LayoutTab = styled.button`
    padding: 0 16px;
    color: ${p => p.$active ? "#e6e9ee" : "#aab0ba"};
    font-weight: ${p => p.$active ? 700 : 400};
    background: ${p => p.$active ? theme.panel : "#3a404c"};
    clip-path: polygon(0 0, 100% 0, calc(100% - 9px) 100%, 9px 100%);
`

const StatusGroups = styled.div`
    display: flex;
    gap: 4px;
    padding-top: 2px;
`

const StatusGroup = styled.div`
    display: flex;
    align-items: center;
    height: 35px;
    background: #3b4250;
`

const StatusButton = styled(IconButton)`
    width: ${p => p.$width || 36}px;
    height: 34px;
    ${p => p.$active && css`
        width: 34px;
        margin-right: 2px;
        background: ${theme.active};
    `}
`

const StatusText = styled.span`
    font-size: ${p => p.$bold ? 18 : 16}px;
    font-weight: ${p => p.$bold ? 700 : 400};
    color: #e3e6eb;
`

const SmudgeClip = styled.div`
    position: absolute;
    inset: 0;
    overflow: hidden;
    pointer-events: none;
`

const Smudge = styled.div`
    position: absolute;
    left: 658px;
    bottom: -12px;
    width: 154px;
    height: 84px;
    background: linear-gradient(#e6e6e6 0, #bcbebf 34%, #9b9ea1 64%, #8f959a 100%);
    filter: blur(6px);
`

/* ---------- watermark ---------- */

const Watermark = styled.div`
    position: absolute;
    right: 8px;
    top: 18px;
    display: flex;
    align-items: center;
    color: rgba(150, 157, 165, 0.65);
    font-size: 46px;
    font-weight: 300;
    line-height: 50px;
    pointer-events: none;
    svg{
        width: 72px;
        height: 50px;
    }
`

/* ---------- data ---------- */

const quickTools = ["newFile", "open", "save", "saveAs", "openMobile", "saveMobile", "print"]

const menus = [
    "文件(F)", "编辑(E)", "视图(V)", "插入(I)", "格式(O)", "工具(T)", "绘图(D)",
    "标注(N)", "修改(M)", "参数(P)", "窗口(W)", "帮助(H)", "Express",
]

const layerTools = ["layerUser", "layerPrev", "layerState"]

const layerTools2 = [
    "layerMatch", "layerCheck", "layerIn", "layerOut", "layerWalk", "layerIsolate", "|",
    "layerFreeze", "layerOff", "layerLock", "layerUnlock",
]

const dimTools = [
    "dimLinear", "dimAligned", "dimArc", "dimOrdinate", "|",
    "dimRadius", "dimJogged", "dimDiameter", "dimAngular", "|",
    "dimQuick", "dimBaseline", "dimContinue", "dimSpace", "dimBreak", "|",
    "tolerance", "centerMark", "inspect", "jogLine", "|",
    "dimEdit", "dimText", "dimUpdate", "|",
]

const drawTools = [
    "line", "xline", "polyline", "polygon", "rect", "arc", "circle", "cloud", "spline", "ellipse",
    "ellipseArc", "insertBlock", "makeBlock", "point", "hatch", "gradient", "region", "table",
    "mtext", "addSelected",
]

const modifyTools = [
    "erase", "copy", "mirror", "offset", "array", "move", "rotate", "scale", "stretch", "trim",
    "extend", "breakPoint", "breakGap", "join", "chamfer", "fillet", "blend", "explode",
]

const history = [
    "命令: 指定对角点或 [栏选(F)/圈围(WP)/圈交(CP)]:",
    "命令: _.erase 找到 6 个",
    "命令: 指定对角点或 [栏选(F)/圈围(WP)/圈交(CP)]:",
    "命令: _.erase 找到 6 个",
]

const status = [
    [{ text: "模型", width: 45, bold: true }],
    [{ icon: "grid" }, { icon: "snap" }, { caret: true }],
    [{ icon: "ortho" }, { icon: "polar", active: true }, { caret: true }, { icon: "iso", width: 34 }, { caret: true }],
    [{ icon: "tracking", active: true }, { icon: "osnap", active: true }, { caret: true, width: 22 }],
    [{ icon: "annoVisible", active: true }, { icon: "annoAuto" }, { icon: "anno" }, { text: "1:1", width: 28 }, { caret: true, width: 20 }],
    [{ icon: "gear" }, { caret: true }],
    [{ icon: "cross" }],
    [{ icon: "shapes" }],
    [{ icon: "graphics" }, { icon: "monitor" }],
    [{ icon: "fullscreen" }, { icon: "menu" }],
]

const ToolButtons = ({ names }) =>
    names.map((name, i) => name === "|"
        ? <Separator key={i}/>
        : <IconButton key={i} type="button" aria-label={name}><Icon name={name}/></IconButton>
    )

const CaretButton = ({ label, color }) =>
    <IconButton type="button" aria-label={label}><Caret $color={color}/></IconButton>

/* ---------- sections ---------- */

const Title = () =>
    <TitleBar>
        <Tools $gap={8}>
            <IconButton type="button" aria-label="application menu" $gap={4}>
                <Icon name="logo"/><Caret/>
            </IconButton>
        </Tools>
        <Tools $gap={10} $before={24}><ToolButtons names={quickTools}/></Tools>
        <Tools $gap={7} $before={10}>
            <ToolButtons names={["undo"]}/>
            <CaretButton label="undo list" color="#9299a3"/>
            <ToolButtons names={["redo"]}/>
            <CaretButton label="redo list" color="#9299a3"/>
        </Tools>
        <Workspace>
            <Icon name="gear"/>
            <PlainSelect aria-label="workspace"><option>经典2</option></PlainSelect>
            <Caret/>
        </Workspace>
        <Tools $gap={10} $before={7}>
            <IconButton type="button" aria-label="customize"><OverflowMark><Caret/></OverflowMark></IconButton>
            <IconButton type="button" $gap={5}><Icon name="share"/>共享</IconButton>
        </Tools>
        <DocTitle>不锈钢.dwg</DocTitle>
        <Tools $gap={10}>
            <IconButton type="button" aria-label="expand search"><CaretRight/></IconButton>
            <SearchInput type="text" aria-label="search" placeholder="键入关键字或短语"/>
        </Tools>
        <Tools $gap={11} $before={7}>
            <IconButton type="button" aria-label="find"><Icon name="search"/></IconButton>
            <IconButton type="button" $gap={5}><Icon name="user"/>登录</IconButton>
        </Tools>
        <Tools $gap={8} $before={88}>
            <CaretButton label="account"/>
            <Tools $gap={7} $before={7}>
                <ToolButtons names={["cart", "autodesk"]}/>
                <CaretButton label="apps"/>
            </Tools>
        </Tools>
        <Tools $gap={13} $before={13}>
            <Divider/>
            <IconButton type="button" aria-label="help" $gap={8}><Icon name="help"/><Caret/></IconButton>
        </Tools>
        <Tools $gap={17} $before={100}>
            <IconButton type="button" aria-label="minimize"><Icon name="minimize" size={20}/></IconButton>
            <IconButton type="button" aria-label="restore"><Icon name="restore" size={20}/></IconButton>
            <IconButton type="button" aria-label="close"><Icon name="close" size={20}/></IconButton>
        </Tools>
    </TitleBar>

const Menu = () =>
    <MenuBar>
        <MenuList>
            {menus.map(menu => <MenuLink key={menu} href="#">{menu}</MenuLink>)}
        </MenuList>
        <Tools $gap={6}>
            <IconButton type="button" aria-label="minimize drawing"><Icon name="minimize" size={20}/></IconButton>
            <IconButton type="button" aria-label="restore drawing"><Icon name="restore" size={20}/></IconButton>
            <IconButton type="button" aria-label="close drawing"><Icon name="close" size={20}/></IconButton>
        </Tools>
    </MenuBar>

const Toolbars = () =>
    <ToolbarArea>
        <ToolbarRow>
            <Toolbar>
                <Grip/>
                <ToolButtons names={["layerProps"]}/>
                <Combo $width={446} $pad={4}>
                    <Tools $gap={0}>
                        <Icon name="bulb"/>
                        <Icon name="sun"/>
                        <Tools $gap={3} $before={4}>
                            <Icon name="sunFrame"/>
                            <Icon name="unlock"/>
                            <Swatch/>
                        </Tools>
                    </Tools>
                    <PlainSelect aria-label="layer"><option>0</option></PlainSelect>
                    <Chevron/>
                </Combo>
                <ToolButtons names={layerTools}/>
            </Toolbar>
            <Toolbar>
                <Grip/>
                <ToolButtons names={layerTools2}/>
            </Toolbar>
        </ToolbarRow>
        <ToolbarRow>
            <Toolbar>
                <Grip/>
                <ToolButtons names={dimTools}/>
                <Combo $width={177} $pad={26}>
                    <PlainSelect aria-label="dimension style"><option>ISO-25</option></PlainSelect>
                    <Chevron/>
                </Combo>
                <ToolButtons names={["dimStyle"]}/>
            </Toolbar>
            <Toolbar>
                <Grip/>
                <Combo $width={221} $pad={2}>
                    <Swatch/>
                    <PlainSelect aria-label="color"><option>ByLayer</option></PlainSelect>
                    <Chevron/>
                </Combo>
                <Separator/>
                <Combo $width={236} $pad={8}>
                    <LineSample $width={88}/>
                    <PlainSelect aria-label="linetype"><option>ByLayer</option></PlainSelect>
                    <Chevron/>
                </Combo>
                <Separator/>
                <Combo $width={184} $pad={8}>
                    <LineSample $width={50}/>
                    <PlainSelect aria-label="lineweight"><option>ByLayer</option></PlainSelect>
                    <Chevron/>
                </Combo>
                <Separator/>
                <Combo $width={179} $pad={15} $off>
                    <PlainSelect aria-label="plot style" disabled><option>ByColor</option></PlainSelect>
                    <Chevron off/>
                </Combo>
            </Toolbar>
        </ToolbarRow>
    </ToolbarArea>

const Plan = () =>
    <Drawing viewBox="53 191 1809 712" aria-label="section drawing">
        <g fill="none" stroke="#9a9a9a" strokeWidth="3">
            <path d="M53 362.500H1841"/>
            <path d="M53 543.500H415M1298 543.500H1841"/>
            <path d="M53 652.500H415M1298 652.500H1841"/>
            <path d="M79.500 598V625"/>
            <path d="M416 518.500H1243"/>
            <path d="M421.500 525V751.500H354.500V706"/>
            <path d="M1237.500 525V751.500H1304.500V706"/>
            <path d="M1243.500 464V745"/>
        </g>
        <g fill="none" stroke="#c6c6c6" strokeWidth="2">
            <path d="M1841 361V707"/>
            <path d="M53 598H415M1298 598H1841"/>
            <path d="M53 706H415M1298 706H1841"/>
            <path d="M53 625H80M147 598V652"/>
            <path d="M360 464H1298V745H1243"/>
            <path d="M416 464V745H361V652"/>
            <path d="M421 525H1239"/>
            <path d="M1457 598V652M1683 598V652M1524 652V625H1615V598"/>
            <path d="M73 806V881H148M66 873H81V888H66Z"/>
        </g>
        <g fill="none" stroke="#dcdcdc" strokeWidth="2">
            <path d="M340 191V617M340 635V903M53 626H331M349 626H1862"/>
            <rect x="331" y="618" width="18" height="17"/>
        </g>
    </Drawing>

const Workarea = () =>
    <Body>
        <SideToolbar $height={666}>
            <Grip $flat/>
            <SideTools><ToolButtons names={drawTools}/></SideTools>
        </SideToolbar>
        <Canvas>
            <Plan/>
            <ViewLabel>[−][俯视][二维线框]</ViewLabel>
            <Caption>复制一份做另外一个方案</Caption>
            <AxisLabel $x={19} $y={586}>Y</AxisLabel>
            <AxisLabel $x={98} $y={665}>X</AxisLabel>
            <ViewCube>
                <Ring viewBox="0 0 120 120" aria-hidden="true">
                    <circle cx="60" cy="60" r="53" fill="none" stroke="#383838" strokeWidth="13"/>
                    <rect x="35" y="35" width="50" height="50" fill="#a2a2a2" stroke="#7c7c7c" strokeWidth="2"/>
                    <rect x="45" y="44" width="30" height="32" fill="#999ba0"/>
                    <path d="M59 48v21" stroke="#444" strokeWidth="3"/>
                    <path d="M67 56h4M70 68h4" stroke="#444" strokeWidth="1"/>
                </Ring>
                <Compass $area="1 / 2">北</Compass>
                <Compass $area="2 / 1">西</Compass>
                <Compass $area="2 / 3">东</Compass>
                <Compass $area="3 / 2">南</Compass>
            </ViewCube>
            <WcsButton type="button">WCS<Caret $color="#8f909b"/></WcsButton>
        </Canvas>
        <SideToolbar $height={601} $before={7}>
            <Grip $flat/>
            <SideTools><ToolButtons names={modifyTools}/></SideTools>
        </SideToolbar>
    </Body>

const Command = () =>
    <CommandPanel>
        <CommandHandle>
            <Grip $flat/>
            <IconButton type="button" aria-label="close command line"><Icon name="close" size={20}/></IconButton>
            <WrenchButton type="button" aria-label="customize command line"><Icon name="wrench" size={24}/></WrenchButton>
        </CommandHandle>
        <CommandBody>
            <History>{history.join("\n")}</History>
            <Prompt>
                <Icon name="prompt" size={24}/>
                <Caret $color="#8c8f94"/>
                <CommandInput type="text" aria-label="command" placeholder="键入命令"/>
            </Prompt>
        </CommandBody>
    </CommandPanel>

const Status = () =>
    <StatusBar>
        <LayoutTabs>
            <LayoutTab type="button" $active>模型</LayoutTab>
            <LayoutTab type="button">布局1</LayoutTab>
            <LayoutTab type="button">布局2</LayoutTab>
            <NewTab type="button" aria-label="new layout" $before={6}><Icon name="plus" size={22}/></NewTab>
        </LayoutTabs>
        <StatusGroups>
            {status.map((group, i) =>
                <StatusGroup key={i}>
                    {group.map((item, j) =>
                        <StatusButton
                            key={j}
                            type="button"
                            aria-label={item.text || item.icon || "options"}
                            $active={item.active}
                            $width={item.width || (item.caret ? 24 : 36)}
                        >
                            {item.caret && <Caret/>}
                            {item.icon && <Icon name={item.icon}/>}
                            {item.text && <StatusText $bold={item.bold}>{item.text}</StatusText>}
                        </StatusButton>
                    )}
                </StatusGroup>
            )}
        </StatusGroups>
    </StatusBar>

const App = () =>
    <>
        <GlobalStyle/>
        <Page>
            <Title/>
            <Menu/>
            <FileTabs>
                <FileTab>开始</FileTab>
                <FileTab $active>
                    不锈钢*
                    <IconButton type="button" aria-label="close tab"><Icon name="tabClose" size={20}/></IconButton>
                </FileTab>
                <NewTab type="button" aria-label="new tab" $before={0}><Icon name="plus"/></NewTab>
            </FileTabs>
            <Toolbars/>
            <Workarea/>
            <Command/>
            <Status/>
            <SmudgeClip><Smudge/></SmudgeClip>
            <Watermark>
                <svg viewBox="0 0 72 50" fill="none" stroke="currentColor" strokeWidth="3" aria-hidden="true">
                    <path d="M0 12c6-1 8 2 8 8v18c0 6 4 8 10 8"/>
                    <path d="M24 9l4-6 5 6h20l5-6 4 6c6 2 8 5 8 9v18c0 7-4 10-11 10H27c-7 0-11-3-11-10V18c0-5 3-8 8-9z"/>
                    <path d="M32 15h22M35 20h16M43 10v10M16 29h6M16 36h6M64 29h6M64 36h6"/>
                    <path d="M39 25l11 7-11 7z" fill="currentColor" stroke="none"/>
                </svg>
                虎课网
            </Watermark>
        </Page>
    </>

export default App
